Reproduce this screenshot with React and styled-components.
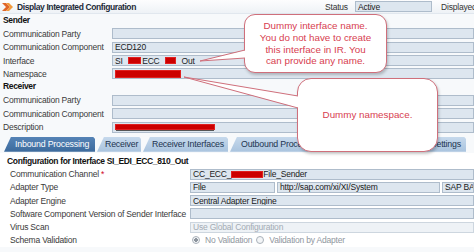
import React from 'react'
import styled, { createGlobalStyle } from 'styled-components'

const Global = createGlobalStyle`
  html, body { margin: 0; padding: 0; background: #ffffff; }
  * { box-sizing: border-box; }
`

const Page = styled.div`
  position: relative;
  width: 474px;
  height: 252px;
  overflow: hidden;
  background: #f7f9fb;
  font-family: "Liberation Sans", Arial, sans-serif;
  font-size: 8.5px;
  letter-spacing: -0.2px;
  color: #2e2e2e;
`

const TitleBar = styled.div`
  display: grid;
  grid-template-columns: 325px 30px 77px 1fr;
  align-items: center;
  height: 14px;
  background: linear-gradient(#fdfdfe, #eef2f6);
  border-bottom: 1px solid #e1e7ee;
`

const TitleText = styled.div`
  display: flex;
  align-items: center;
  gap: 3px;
  padding-left: 2px;
  font-weight: bold;
  letter-spacing: -0.4px;
  color: #1d2a38;
`

const StatusLabel = styled.span`
  color: #333;
  white-space: nowrap;
  padding-left: ${p => p.indent || 0}px;
`

const Section = styled.div`
  display: flex;
  flex-direction: column;
`

const Heading = styled.div`
  height: ${p => p.h || 13.3}px;
  line-height: ${p => p.h || 13.3}px;
  padding-left: ${p => p.indent || 3}px;
  font-weight: bold;
  color: #111;
  letter-spacing: -0.35px;
`

const Row = styled.div`
  display: grid;
  grid-template-columns: ${p => p.labelWidth}px 1fr;
  align-items: center;
  height: ${p => p.h || 13.3}px;
`

const Label = styled.div`
  padding-left: ${p => p.indent || 3}px;
  color: #3a3a3a;
  white-space: nowrap;
`

const Req = styled.span`
  color: #d0021b;
  margin-left: 2px;
`

const Fields = styled.div`
  display: flex;
  gap: 2px;
  min-width: 0;
`

const Field = styled.div`
  display: flex;
  align-items: center;
  height: 11px;
  flex: ${p => (p.w ? `0 0 ${p.w}px` : '1 1 auto')};
  padding: 0 2px;
  background: ${p => (p.disabled ? '#eef2f6' : '#dde6ef')};
  border: 1px solid ${p => (p.disabled ? '#cdd6df' : '#aebccb')};
  color: ${p => (p.disabled ? '#a3abb4' : '#1a1a1a')};
  white-space: nowrap;
  overflow: hidden;
`

const Redact = styled.span`
  display: inline-block;
  width: ${p => p.w}px;
  height: ${p => p.h || 7}px;
  margin: 0 ${p => p.gap || 0}px;
  background: #cc0000;
  border: 1px solid #e02020;
  flex-shrink: 0;
  ${p => p.scribble && 'box-shadow: 0 2px 0 -1px #555;'}
`

const TabBar = styled.div`
  display: flex;
  align-items: flex-end;
  gap: 2px;
  height: 19px;
  padding: 0 0 1px 4px;
  background: #f7f9fb;
`

const Tab = styled.div`
  display: flex;
  align-items: center;
  height: 15px;
  flex: 0 0 ${p => p.w}px;
  padding-left: ${p => p.pad || 11}px;
  white-space: nowrap;
  overflow: hidden;
  font-size: 8.8px;
  clip-path: polygon(7px 0, calc(100% - 2px) 0, 100% 2px, 100% 100%, 0 100%);
  background: ${p => (p.active ? 'linear-gradient(#5583b6, #3c6a9c)' : 'linear-gradient(#c6d9ec, #a9c3de)')};
  color: ${p => (p.active ? '#ffffff' : '#1d3450')};
`

const Lower = styled.div`
  display: flex;
  flex-direction: column;
  background: #ffffff;
  padding-top: 1px;
`

const Radios = styled.div`
  display: flex;
  align-items: center;
  gap: 4px;
  padding-left: 2px;
  color: #8f969e;
`

const Radio = styled.span`
  display: inline-block;
  width: 8px;
  height: 8px;
  border-radius: 50%;
  border: 1px solid #a9b1ba;
  background: ${p => (p.checked ? 'radial-gradient(circle, #8d959e 0 1.6px, #f3f5f7 2px)' : '#f3f5f7')};
  margin-right: 1px;
`

const Callout = styled.div`
  position: absolute;
  left: ${p => p.x}px;
  top: ${p => p.y}px;
  width: ${p => p.w}px;
  height: ${p => p.h}px;
  display: flex;
  align-items: center;
  justify-content: center;
  text-align: center;
  background: #ffffff;
  border: 1px solid #cf6f7b;
  border-radius: ${p => p.r || 11}px;
  box-shadow: 1px 2px 3px rgba(0, 0, 0, 0.22);
  font-size: 9.8px;
  letter-spacing: 0;
  line-height: 11.8px;
  color: #d7404f;
`

const Tails = styled.svg`
  position: absolute;
  left: 0;
  top: 0;
  pointer-events: none;
`

function DisplayIcon() {
  return (
    <svg width="12" height="10" viewBox="0 0 12 10">
      <path d="M0 1 L4 1 L8 5 L4 9 L0 9 L4 5 Z" fill="#e0662a" />
      <path d="M4 1 L7 1 L11 5 L7 9 L4 9 L8 5 Z" fill="#f29a3c" />
    </svg>
  )
}

export default function App() {
  return (
    <Page>
      <Global />
      <TitleBar>
        <TitleText>
          <DisplayIcon />
          Display Integrated Configuration
        </TitleText>
        <StatusLabel>Status</StatusLabel>
        <Field>Active</Field>
        <StatusLabel indent={9}>Displayed</StatusLabel>
      </TitleBar>

      <Section>
        <Heading>Sender</Heading>
        <Row labelWidth={112}>
          <Label>Communication Party</Label>
          <Field />
        </Row>
        <Row labelWidth={112}>
          <Label>Communication Component</Label>
          <Field>ECD120</Field>
        </Row>
        <Row labelWidth={112}>
          <Label>Interface</Label>
          <Field>
            SI_<Redact w={13} gap={1} />ECC_<Redact w={11} gap={1} />_Out
          </Field>
        </Row>
        <Row labelWidth={112}>
          <Label>Namespace</Label>
          <Field>
            <Redact w={66} h={8} />
          </Field>
        </Row>
        <Heading>Receiver</Heading>
        <Row labelWidth={112}>
          <Label>Communication Party</Label>
          <Field />
        </Row>
        <Row labelWidth={112}>
          <Label>Communication Component</Label>
          <Field />
        </Row>
        <Row labelWidth={112}>
          <Label>Description</Label>
          <Field>
            <Redact w={100} h={6} scribble />
          </Field>
        </Row>
      </Section>

      <TabBar>
        <Tab active w={91}>Inbound Processing</Tab>
        <Tab w={44} pad={8}>Receiver</Tab>
        <Tab w={85} pad={9}>Receiver Interfaces</Tab>
        <Tab w={148}>Outbound Processing</Tab>
        <Tab w={86}>Advanced Settings</Tab>
      </TabBar>

      <Lower>
        <Heading indent={7} h={14}>
          Configuration for Interface SI_EDI_ECC_810_Out
        </Heading>
        <Row labelWidth={190} h={13.2}>
          <Label indent={10}>
            Communication Channel<Req>*</Req>
          </Label>
          <Field>
            CC_ECC_<Redact w={32} />File_Sender
          </Field>
        </Row>
        <Row labelWidth={190} h={13.2}>
          <Label indent={10}>Adapter Type</Label>
          <Fields>
            <Field w={85}>File</Field>
            <Field w={163}>http://sap.com/xi/XI/System</Field>
            <Field>SAP BA</Field>
          </Fields>
        </Row>
        <Row labelWidth={190} h={13.2}>
          <Label indent={10}>Adapter Engine</Label>
          <Field>Central Adapter Engine</Field>
        </Row>
        <Row labelWidth={190} h={13.2}>
          <Label indent={10}>Software Component Version of Sender Interface</Label>
          <Field />
        </Row>
        <Row labelWidth={190} h={13.2}>
          <Label indent={10}>Virus Scan</Label>
          <Field disabled>Use Global Configuration</Field>
        </Row>
        <Row labelWidth={190} h={13.2}>
          <Label indent={10}>Schema Validation</Label>
          <Radios>
            <Radio checked />No Validation
            <Radio />Validation by Adapter
          </Radios>
        </Row>
      </Lower>

      <Callout x={244} y={14} w={143} h={59}>
        Dummy interface name.
        <br />
        You do not have to create
        <br />
        this interface in IR. You
        <br />
        can provide any name.
      </Callout>
      <Callout x={297} y={78} w={141} h={74} r={14}>
        Dummy namespace.
      </Callout>

      <Tails width="474" height="252">
        <path d="M246 50 L200 61 L246 58 Z" fill="#ffffff" />
        <polyline points="245,50 200,61 245,58" fill="none" stroke="#cf6f7b" strokeWidth="1" />
        <path d="M299 96 L184 77 L299 108 Z" fill="#ffffff" />
        <polyline points="298,96 184,77 298,108" fill="none" stroke="#cf6f7b" strokeWidth="1" />
      </Tails>
    </Page>
  )
}
